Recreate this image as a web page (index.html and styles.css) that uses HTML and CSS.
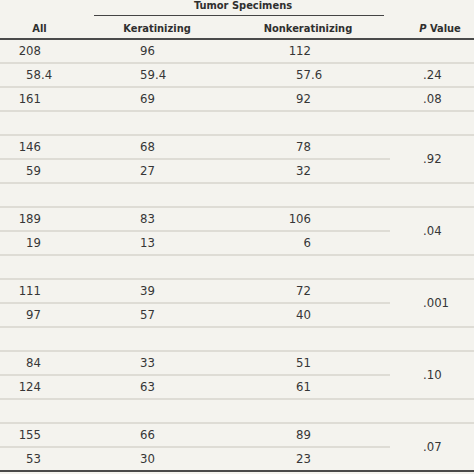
FILE: index.html
```html
<!DOCTYPE html>
<html>
<head>
<meta charset="utf-8">
<link rel="stylesheet" href="styles.css">
</head>
<body>
<table class="t">
<colgroup><col class="c1"><col class="c2"><col class="c3"><col class="c4"></colgroup>
<thead>
<tr class="sp"><th></th><th colspan="2"><div class="spanner">Tumor Specimens</div></th><th></th></tr>
<tr class="hd"><th class="h1">All</th><th class="h2">Keratinizing</th><th class="h3">Nonkeratinizing</th><th class="h4"><i>P</i> Value</th></tr>
</thead>
<tbody>
<tr><td class="a"><span class="n">208</span></td><td class="k"><span class="n">96</span></td><td class="nk"><span class="n">112</span></td><td class="p"></td></tr>
<tr><td class="a"><span class="n">58</span>.4</td><td class="k"><span class="n">59</span>.4</td><td class="nk"><span class="n">57</span>.6</td><td class="p">.24</td></tr>
<tr><td class="a"><span class="n">161</span></td><td class="k"><span class="n">69</span></td><td class="nk"><span class="n">92</span></td><td class="p">.08</td></tr>
<tr class="blank"><td></td><td></td><td></td><td></td></tr>
<tr><td class="a"><span class="n">146</span></td><td class="k"><span class="n">68</span></td><td class="nk"><span class="n">78</span></td><td class="p" rowspan="2">.92</td></tr>
<tr><td class="a"><span class="n">59</span></td><td class="k"><span class="n">27</span></td><td class="nk"><span class="n">32</span></td></tr>
<tr class="blank"><td></td><td></td><td></td><td></td></tr>
<tr><td class="a"><span class="n">189</span></td><td class="k"><span class="n">83</span></td><td class="nk"><span class="n">106</span></td><td class="p" rowspan="2">.04</td></tr>
<tr><td class="a"><span class="n">19</span></td><td class="k"><span class="n">13</span></td><td class="nk"><span class="n">6</span></td></tr>
<tr class="blank"><td></td><td></td><td></td><td></td></tr>
<tr><td class="a"><span class="n">111</span></td><td class="k"><span class="n">39</span></td><td class="nk"><span class="n">72</span></td><td class="p" rowspan="2">.001</td></tr>
<tr><td class="a"><span class="n">97</span></td><td class="k"><span class="n">57</span></td><td class="nk"><span class="n">40</span></td></tr>
<tr class="blank"><td></td><td></td><td></td><td></td></tr>
<tr><td class="a"><span class="n">84</span></td><td class="k"><span class="n">33</span></td><td class="nk"><span class="n">51</span></td><td class="p" rowspan="2">.10</td></tr>
<tr><td class="a"><span class="n">124</span></td><td class="k"><span class="n">63</span></td><td class="nk"><span class="n">61</span></td></tr>
<tr class="blank"><td></td><td></td><td></td><td></td></tr>
<tr><td class="a"><span class="n">155</span></td><td class="k"><span class="n">66</span></td><td class="nk"><span class="n">89</span></td><td class="p last" rowspan="2">.07</td></tr>
<tr class="lastrow"><td class="a"><span class="n">53</span></td><td class="k"><span class="n">30</span></td><td class="nk"><span class="n">23</span></td></tr>
</tbody>
</table>
</body>
</html>
```
FILE: styles.css
```css
html, body {
  margin: 0;
  padding: 0;
  background: #f4f3ee;
}
body {
  font-family: "DejaVu Sans Condensed", "DejaVu Sans", sans-serif;
  font-stretch: condensed;
  color: #363636;
}
.t {
  width: 474px;
  table-layout: fixed;
  border-collapse: separate;
  border-spacing: 0;
}
.c1 { width: 93px; }
.c2 { width: 137px; }
.c3 { width: 160px; }
.c4 { width: 84px; }
th {
  padding: 0;
  font-size: 11px;
  font-weight: bold;
  color: #2f2f2f;
}
.sp th {
  height: 16px;
  vertical-align: top;
}
.spanner {
  margin-right: 6px;
  margin-left: 1px;
  height: 15px;
  line-height: 12px;
  padding-left: 8px;
  border-bottom: 1px solid #444;
  text-align: center;
}
.hd th {
  height: 19px;
  padding-top: 3px;
  line-height: 19px;
  border-bottom: 2px solid #4a4a4a;
  text-align: center;
  vertical-align: top;
}
.h1 { padding-right: 14px; }
.h2 { padding-right: 9px; }
.h3 { padding-right: 4px; }
.h4 { padding-left: 16px; }
td {
  padding: 0;
  height: 22px;
  line-height: 22px;
  font-size: 13px;
  border-bottom: 2px solid #dedcd5;
  vertical-align: middle;
  white-space: nowrap;
}
.n {
  display: inline-block;
  text-align: right;
}
.a { padding-left: 10px; }
.a .n { width: 31px; }
.k { padding-left: 47px; }
.k .n { width: 15px; }
.nk { padding-left: 50px; }
.nk .n { width: 31px; }
.p { padding-left: 33px; }
.lastrow td, .p.last {
  border-bottom: 2px solid #4a4a4a;
}
```
